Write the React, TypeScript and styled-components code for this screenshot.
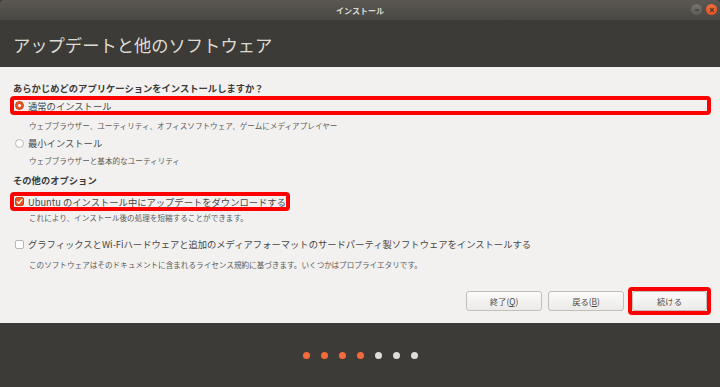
import React from "react";
import styled, { createGlobalStyle } from "styled-components";

const Global = createGlobalStyle`
  html, body { margin: 0; padding: 0; background: #3c3b37; }
  body { font-family: "Noto Sans CJK JP", "Noto Sans", sans-serif; }
  * { box-sizing: border-box; }
`;

const Window = styled.div`
  width: 720px;
  height: 387px;
  display: flex;
  flex-direction: column;
  background: #3c3b37;
  overflow: hidden;
`;

const TitleBar = styled.div`
  height: 20px;
  flex: none;
  display: flex;
  align-items: center;
  justify-content: center;
  position: relative;
  background: linear-gradient(#5a5752, #4a4843);
  color: #dfdbd2;
  font-size: 8px;
  font-weight: 700;
  border-radius: 4px 4px 0 0;
`;

const Controls = styled.div`
  position: absolute;
  right: 3px;
  top: 4px;
  display: flex;
  gap: 4px;
`;

const Ctl = styled.div<{ $close?: boolean }>`
  width: 11px;
  height: 11px;
  border-radius: 50%;
  background: ${(p) => (p.$close ? "linear-gradient(#f26b3a, #e4521f)" : "linear-gradient(#76736d, #5f5c57)")};
  display: flex;
  align-items: center;
  justify-content: center;
`;

const Header = styled.div`
  height: 47px;
  flex: none;
  display: flex;
  align-items: center;
  padding-left: 13px;
  padding-top: 1px;
  color: #dfdbd2;
  font-size: 17.3px;
  background: #3d3b37;
`;

const Content = styled.div`
  height: 256px;
  flex: none;
  background: #f2f1f0;
  padding: 0 9px 0 10px;
  display: flex;
  flex-direction: column;
  color: #474747;
`;

const Heading = styled.div<{ $mt: number; $h: number }>`
  margin-top: ${(p) => p.$mt}px;
  height: ${(p) => p.$h}px;
  line-height: ${(p) => p.$h}px;
  padding-left: 3px;
  font-size: 9.3px;
  font-weight: 700;
  color: #3a3a3a;
  white-space: nowrap;
`;

const Highlight = styled.div<{ $mt: number; $w?: number }>`
  margin-top: ${(p) => p.$mt}px;
  width: ${(p) => (p.$w ? `${p.$w}px` : "auto")};
  border: 4px solid #ff0000;
  border-radius: 4px;
  padding-left: 1px;
`;

const Option = styled.div<{ $mt?: number; $h: number; $pl?: number }>`
  margin-top: ${(p) => p.$mt ?? 0}px;
  height: ${(p) => p.$h}px;
  display: flex;
  align-items: center;
  gap: 4px;
  padding-left: ${(p) => p.$pl ?? 0}px;
  font-size: 9.3px;
  color: #474747;
  white-space: nowrap;
`;

const Radio = styled.span<{ $on?: boolean }>`
  width: 9px;
  height: 9px;
  border-radius: 50%;
  flex: none;
  border: 1px solid ${(p) => (p.$on ? "#c9481c" : "#b8b6b2")};
  background: ${(p) => (p.$on ? "#e95420" : "#ffffff")};
  display: flex;
  align-items: center;
  justify-content: center;
  &::after {
    content: "";
    width: 3px;
    height: 3px;
    border-radius: 50%;
    background: ${(p) => (p.$on ? "#ffffff" : "transparent")};
  }
`;

const Check = styled.span<{ $on?: boolean }>`
  width: 9px;
  height: 9px;
  border-radius: 2px;
  flex: none;
  border: 1px solid ${(p) => (p.$on ? "#c9481c" : "#b8b6b2")};
  background: ${(p) => (p.$on ? "#e95420" : "#ffffff")};
  display: flex;
  align-items: center;
  justify-content: center;
`;

const Desc = styled.div<{ $h: number }>`
  height: ${(p) => p.$h}px;
  line-height: ${(p) => p.$h}px;
  padding-left: 19px;
  font-size: 7.6px;
  color: #5a5a5a;
  white-space: nowrap;
`;

const ButtonRow = styled.div`
  margin-top: 10px;
  display: flex;
  justify-content: flex-end;
  align-items: center;
  gap: 6px;
`;

const Button = styled.button<{ $w?: number }>`
  width: ${(p) => p.$w ?? 76}px;
  height: 20px;
  padding: 0;
  border: 1px solid #c2bfbb;
  border-radius: 3px;
  background: linear-gradient(#fbfbfa, #ebeae8);
  font-family: "Noto Sans CJK JP", "Noto Sans", sans-serif;
  font-size: 8.3px;
  color: #4a4a4a;
  display: flex;
  align-items: center;
  justify-content: center;
`;

const ButtonFrame = styled.div`
  margin-left: -2px;
  border: 4px solid #ff0000;
  border-radius: 4px;
  padding: 0;
  display: flex;
`;

const Footer = styled.div`
  flex: 1;
  display: flex;
  align-items: center;
  justify-content: center;
  gap: 11px;
  background: #3d3b37;
`;

const Dot = styled.span<{ $on?: boolean }>`
  width: 7px;
  height: 7px;
  border-radius: 50%;
  background: ${(p) => (p.$on ? "#f36b3b" : "#dedddb")};
`;

const CheckMark = () => (
  <svg width="7" height="7" viewBox="0 0 8 8">
    <path d="M1.3 4.2 L3.2 6 L6.8 1.8" stroke="#fff" strokeWidth="1.5" fill="none" strokeLinecap="round" strokeLinejoin="round" />
  </svg>
);

export default function App() {
  return (
    <>
      <Global />
      <Window>
        <TitleBar>
          インストール
          <Controls>
            <Ctl>
              <svg width="6" height="6" viewBox="0 0 6 6">
                <path d="M1 3 H5" stroke="#3c3b37" strokeWidth="1.2" />
              </svg>
            </Ctl>
            <Ctl $close>
              <svg width="6" height="6" viewBox="0 0 6 6">
                <path d="M1.2 1.2 L4.8 4.8 M4.8 1.2 L1.2 4.8" stroke="#3c3b37" strokeWidth="1.2" />
              </svg>
            </Ctl>
          </Controls>
        </TitleBar>
        <Header>アップデートと他のソフトウェア</Header>
        <Content>
          <Heading $mt={13} $h={16}>あらかじめどのアプリケーションをインストールしますか？</Heading>
          <Highlight $mt={0}>
            <Option $h={11}>
              <Radio $on />
              通常のインストール
            </Option>
          </Highlight>
          <Desc $h={22}>ウェブブラウザー、ユーティリティ、オフィスソフトウェア、ゲームにメディアプレイヤー</Desc>
          <Option $h={12} $pl={5}>
            <Radio />
            最小インストール
          </Option>
          <Desc $h={24}>ウェブブラウザーと基本的なユーティリティ</Desc>
          <Heading $mt={0} $h={14}>その他のオプション</Heading>
          <Highlight $mt={5} $w={280}>
            <Option $h={11}>
              <Check $on>
                <CheckMark />
              </Check>
              Ubuntu のインストール中にアップデートをダウンロードする
            </Option>
          </Highlight>
          <Desc $h={14}>これにより、インストール後の処理を短縮することができます。</Desc>
          <Option $mt={10} $h={18} $pl={5}>
            <Check />
            グラフィックスとWi-Fiハードウェアと追加のメディアフォーマットのサードパーティ製ソフトウェアをインストールする
          </Option>
          <Desc $h={24}>このソフトウェアはそのドキュメントに含まれるライセンス規約に基づきます。いくつかはプロプライエタリです。</Desc>
          <ButtonRow>
            <Button>
              終了(<u>Q</u>)
            </Button>
            <Button>
              戻る(<u>B</u>)
            </Button>
            <ButtonFrame>
              <Button $w={75}>続ける</Button>
            </ButtonFrame>
          </ButtonRow>
        </Content>
        <Footer>
          <Dot $on />
          <Dot $on />
          <Dot $on />
          <Dot $on />
          <Dot />
          <Dot />
          <Dot />
        </Footer>
      </Window>
    </>
  );
}
